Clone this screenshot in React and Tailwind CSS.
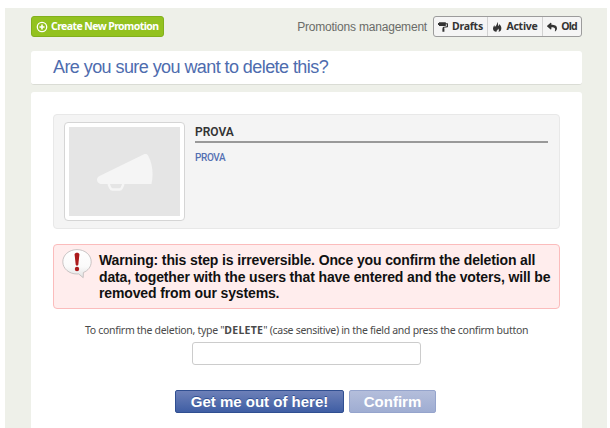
import React, { useState } from "react";
import { FaReply } from "react-icons/fa";

const Roller = ({ className }) => (
  <svg viewBox="0 0 10 10" className={className} fill="currentColor">
    <path d="M1 .3h6.800v.9h1.700q.5 0 .5.5v3q0 .4-.4.500L6 5.700v.5h.4V9.800H4.400V6.200h.4V4.900L8.800 4.200V2.300h-1v1.600H1V2.900H0V1h1Z" />
  </svg>
);

const Flame = ({ className }) => (
  <svg viewBox="0 0 10 10" className={className} fill="currentColor">
    <path d="M5.200 0C6.200 1.300 6 2.500 6.300 4 7 3.600 7.200 3 7.200 2 9 3.600 9.600 5.200 9.300 7 9 8.700 8 9.600 6.500 10 7.200 8.800 7 7.600 6 6.500 6 7.600 5.500 8 4.800 8.600 4.400 9 4.300 9.500 4.500 10 2.500 9.700 1 8.700 1 6.800 1 5.400 1.700 4.400 2.200 3.200 2.700 3.800 2.800 4.300 2.800 5 4.500 3.700 5.200 2.200 5.200 0Z" />
  </svg>
);

const tabs = [
  { label: "Drafts", icon: Roller, className: "w-[54px]", text: "tracking-[-0.25px]" },
  { label: "Active", icon: Flame, className: "w-[55px]", text: "tracking-[-0.25px]" },
  { label: "Old", icon: FaReply, className: "w-[38px]", text: "tracking-[-0.8px]" },
];

const PlusCircle = () => (
  <svg viewBox="0 0 12 12" className="size-[12px] shrink-0" fill="none" stroke="#fff">
    <circle cx="6" cy="6" r="4.7" strokeWidth="1.3" />
    <path d="M6 3.5v5M3.5 6h5" strokeWidth="1.6" />
  </svg>
);

const Megaphone = () => (
  <svg viewBox="0 0 58 40" className="w-[58px] h-[40px]">
    <path
      d="M3.500 24 48 2.300c2-.8 3.300-.3 4.300 1.600C56.800 12 57.500 23 55.500 32H4.500C.5 31 -.5 26 3.500 24Z"
      fill="#f5f5f5"
    />
    <path
      d="M12.500 32l1.800 4q.7 1.500 2.200 1.500h7q1.500 0 2.200-1.500l1.800-4"
      fill="none"
      stroke="#f5f5f5"
      strokeWidth="2.4"
    />
  </svg>
);

const WarningBubble = () => (
  <svg viewBox="0 0 30 30" className="w-[30px] h-[30px] shrink-0">
    <defs>
      <linearGradient id="bubble" x1="0" y1="0" x2="0" y2="1">
        <stop offset="0" stopColor="#fff" />
        <stop offset="0.6" stopColor="#fafafa" />
        <stop offset="1" stopColor="#e2e2e2" />
      </linearGradient>
    </defs>
    <path
      d="M15 .6C7 .6.800 6 .8 12.800S7 25 15 25c.6 0 1 0 1.600-.1L21.200 28.700l.2-5.200C26 21.700 29.200 17.800 29.200 12.800 29.200 6 23 .6 15 .6Z"
      fill="url(#bubble)"
      stroke="#bcb8b8"
      strokeWidth="0.8"
    />
    <path d="M12.600 5.500C12.600 3.300 17.400 3.300 17.400 5.500L16.300 15.800Q15 17.500 13.700 15.800Z" fill="#ac1a1c" />
    <circle cx="15" cy="20" r="2.200" fill="#ac1a1c" />
  </svg>
);

const App = () => {
  const [value, setValue] = useState("");

  const handleSubmit = (e) => {
    e.preventDefault();
  };

  return (
    <div className="h-[428px] overflow-hidden bg-white pt-2 pl-[5px] pr-[3px] font-['Liberation_Sans',Arial,sans-serif]">
      <div className="h-[420px] bg-[#eef0e9] pl-[26px] pr-[25px] pt-2">
        <div className="flex h-[21px] items-center">
          <button className="flex h-[21px] w-[133px] items-center gap-[3px] whitespace-nowrap rounded-[3px] border border-[#82b01c] bg-[#93c21f] pl-[4px] font-['Noto_Sans','DejaVu_Sans',sans-serif] text-[10.500px] font-bold tracking-[-0.58px] text-white">
            <PlusCircle />
            Create New Promotion
          </button>
          <span className="ml-auto mr-[6px] whitespace-nowrap text-[12px] tracking-[-0.2px] text-[#6a6c68]">
            Promotions management
          </span>
          <div className="flex h-[21px] w-[149px] divide-x divide-[#d2d2d2] rounded-[3px] border border-[#9c9c9c] bg-[#f5f5f5] font-['Noto_Sans','DejaVu_Sans',sans-serif] text-[10.500px] font-bold text-[#333]">
            {tabs.map(({ label, icon: Icon, className, text }) => (
              <button
                key={label}
                className={`flex items-center justify-center gap-1 whitespace-nowrap ${className} ${text}`}
              >
                <Icon className="size-[10px] shrink-0" />
                {label}
              </button>
            ))}
          </div>
        </div>

        <h1 className="mt-[14px] h-[34px] whitespace-nowrap rounded-[3px] border-b border-[#dadcd5] bg-white pl-[22px] text-[18px] leading-[32px] tracking-[-0.57px] text-[#4e6cae]">
          Are you sure you want to delete this?
        </h1>

        <div className="mt-[7px] h-[340px] rounded-t-[3px] bg-white px-[22px] pt-[22px]">
          <div className="flex h-[115px] rounded-[4px] border border-[#e8e8e8] bg-[#f4f4f4] pl-[10px] pr-[11px] pt-[7px]">
            <div className="h-[99px] w-[121px] shrink-0 rounded-[4px] border border-[#d5d5d5] bg-white p-[4px]">
              <div className="flex h-full items-center justify-center bg-[#e5e5e5]">
                <Megaphone />
              </div>
            </div>
            <div className="ml-[10px] flex-1 font-[Roboto,sans-serif]">
              <h2 className="h-[21px] border-b-2 border-[#999] text-[12px] font-semibold leading-[20px] text-[#333]">
                PROVA
              </h2>
              <a
                href="#"
                className="mt-[8px] block text-[10px] font-medium leading-[14px] tracking-[-0.4px] text-[#5470b2]"
              >
                PROVA
              </a>
            </div>
          </div>

          <div className="mt-[15px] flex h-[65px] rounded-[4px] border border-[#fbbcbc] bg-[#ffeded] pl-[8px] pt-[4px]">
            <WarningBubble />
            <p className="ml-[7px] mt-[3px] whitespace-nowrap text-[14px] font-bold leading-[16.500px] tracking-[-0.13px] text-[#111]">
              Warning: this step is irreversible. Once you confirm the deletion all
              <br />
              data, together with the users that have entered and the voters, will be
              <br />
              removed from our systems.
            </p>
          </div>

          <form onSubmit={handleSubmit} className="mt-[13px] flex flex-col items-center">
            <label
              htmlFor="confirm"
              className="whitespace-nowrap font-['Noto_Sans','DejaVu_Sans',sans-serif] text-[10.500px] leading-[16px] tracking-[-0.3px] text-[#4a4a4a]"
            >
              To confirm the deletion, type "<b className="tracking-[0.3px]">DELETE</b>" (case sensitive) in the field and press the confirm button
            </label>
            <input
              id="confirm"
              type="text"
              value={value}
              onChange={(e) => setValue(e.target.value)}
              className="mt-[4px] h-[23px] w-[229px] rounded-[3px] border border-[#ccc] bg-white px-2 text-xs outline-none"
            />
            <div className="mt-[25px] flex gap-[5px] self-start pl-[122px] text-[15px] font-bold text-white">
              <button
                type="button"
                className="h-[23px] w-[169px] whitespace-nowrap rounded-[2px] border border-[#304f91] bg-linear-to-b from-[#6d80b8] to-[#3f5ea4] leading-[21px] [text-shadow:0_-1px_0_#304f91]"
              >
                Get me out of here!
              </button>
              <button
                type="submit"
                className="h-[23px] w-[87px] whitespace-nowrap rounded-[2px] border border-[#95a4cc] bg-linear-to-b from-[#b4bedb] to-[#9fadd2] leading-[21px]"
              >
                Confirm
              </button>
            </div>
          </form>
        </div>
      </div>
    </div>
  );
};

export default App;
